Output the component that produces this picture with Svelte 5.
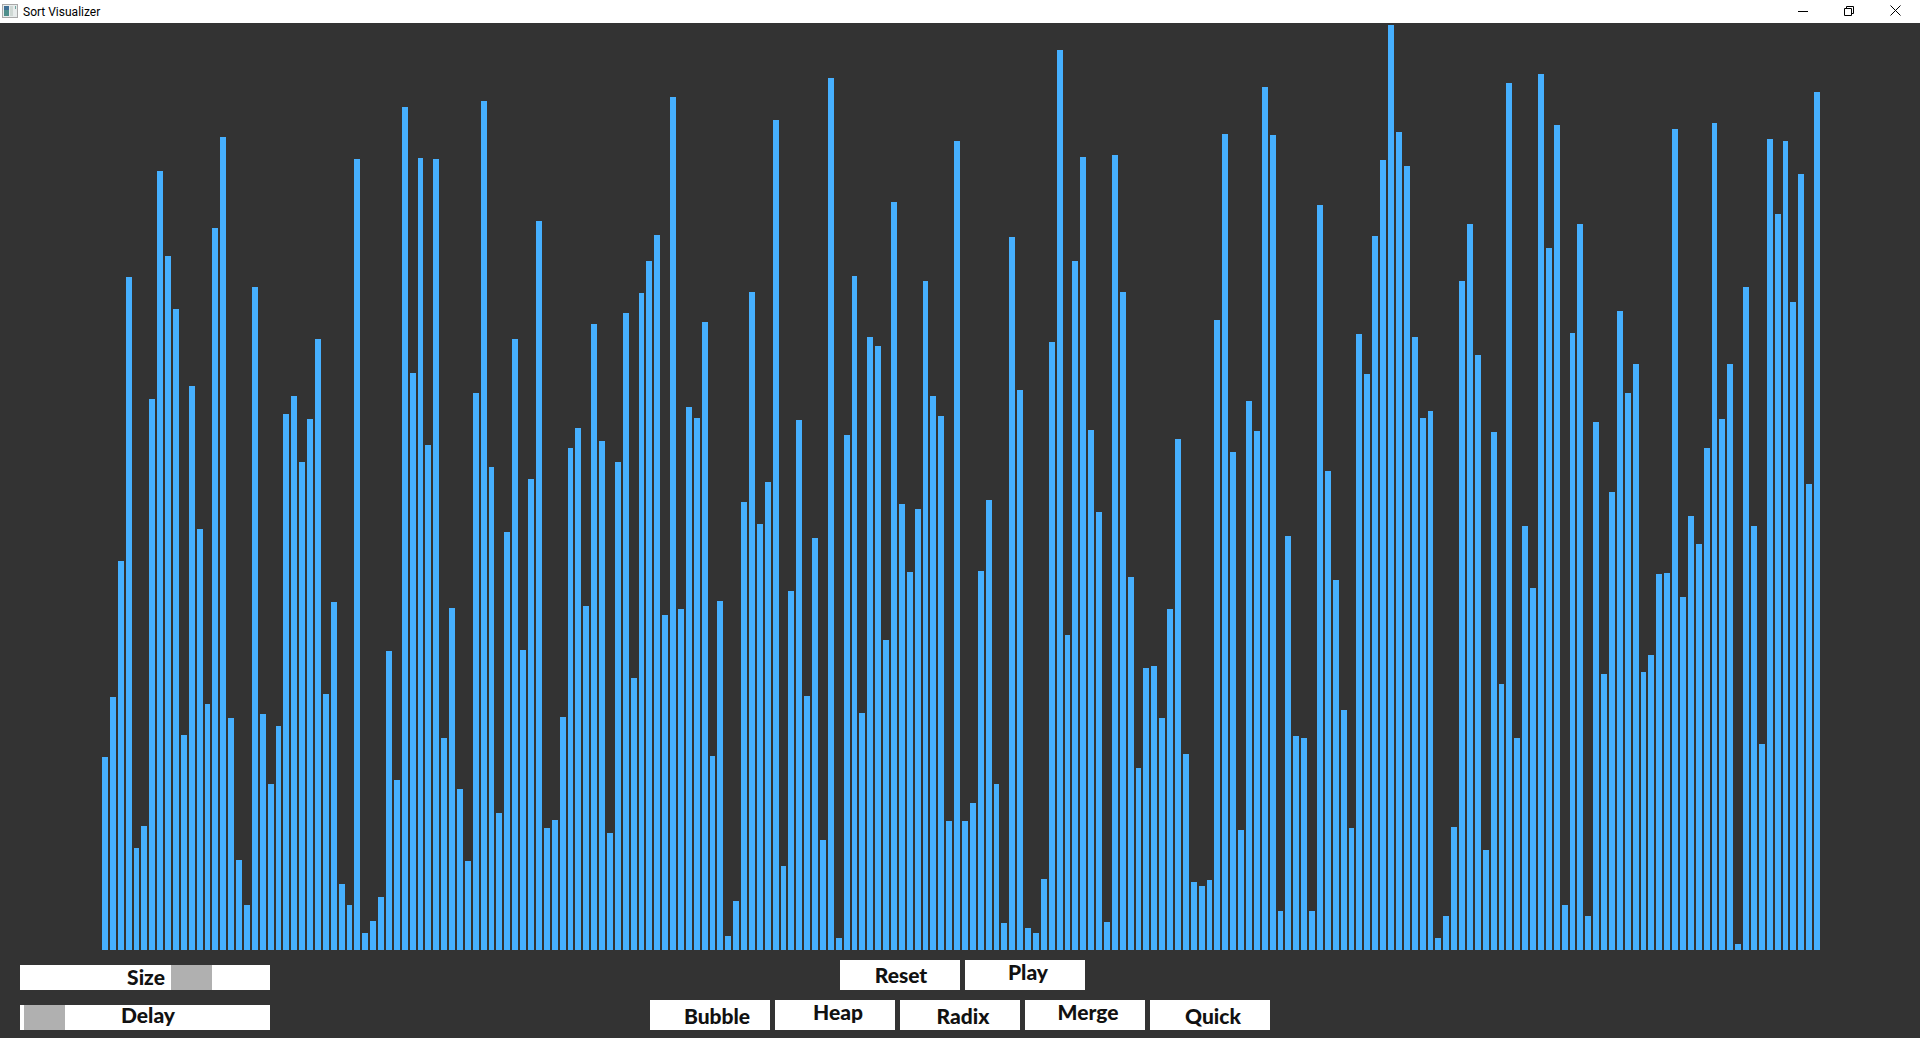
<script>
  // sort state, values in raw units
  const SCALE = 1 / 1.686;
  const values = [
    325, 427, 656, 1135, 172, 209, 929, 1313, 1170, 1081, 363, 951, 710, 415, 1217, 1371, 391, 152, 76, 1118,
    398, 280, 378, 904, 934, 823, 895, 1030, 432, 587, 111, 76, 1334, 29, 49, 89, 504, 287, 1421, 973,
    1335, 851, 1334, 357, 577, 272, 150, 939, 1431, 814, 231, 705, 1030, 506, 794, 1229, 206, 219, 393, 846,
    880, 580, 1056, 858, 197, 823, 1074, 459, 1108, 1162, 1206, 565, 1438, 575, 916, 897, 1059, 327, 588, 24,
    83, 755, 1109, 718, 789, 1399, 142, 605, 894, 428, 695, 186, 1470, 20, 868, 1136, 400, 1034, 1018, 523,
    1261, 752, 637, 744, 1128, 934, 900, 218, 1364, 218, 248, 639, 759, 280, 46, 1202, 944, 37, 29, 120,
    1025, 1517, 531, 1162, 1337, 877, 739, 47, 1340, 1109, 629, 307, 476, 479, 391, 575, 862, 331, 115, 108,
    118, 1062, 1376, 840, 202, 926, 875, 1455, 1374, 66, 698, 361, 357, 66, 1256, 808, 624, 405, 206, 1039,
    971, 1204, 1332, 1560, 1379, 1322, 1034, 897, 909, 20, 57, 207, 1128, 1224, 1003, 169, 873, 449, 1462, 357,
    715, 610, 1477, 1184, 1391, 76, 1040, 1224, 57, 890, 465, 772, 1077, 939, 988, 469, 497, 634, 636, 1384,
    595, 732, 685, 846, 1394, 895, 988, 10, 1118, 715, 347, 1367, 1241, 1364, 1093, 1308, 786, 1447
  ];

  // bars sit on whole pixels, so every ninth one or so comes out a pixel thinner
  const PITCH = 7.8899;
  const barLeft = (i) => Math.round(i * PITCH);
  const barWidth = (i) => barLeft(i + 1) - barLeft(i) - 2;

  // dx/dy: where the label sits inside its button
  const topRow = [
    { label: 'Reset', dx: 1, dy: 0 },
    { label: 'Play', dx: 3, dy: -3 }
  ];
  const algos = [
    { label: 'Bubble', dx: 7, dy: 1 },
    { label: 'Heap', dx: 3, dy: -3 },
    { label: 'Radix', dx: 3, dy: 1 },
    { label: 'Merge', dx: 3, dy: -3 },
    { label: 'Quick', dx: 3, dy: 1 }
  ];
</script>

<div class="window">
  <header class="titlebar">
    <div class="title">
      <svg class="app-icon" width="16" height="14" viewBox="0 0 16 14">
        <rect x="0.5" y="0.5" width="15" height="13" fill="#e8ecec" stroke="#a9a9a9" />
        <rect x="2" y="2" width="5" height="10" fill="#4f8f8c" />
        <rect x="2" y="2" width="5" height="4" fill="#3f6f94" />
        <rect x="8" y="2" width="3" height="10" fill="#cfd8d4" />
        <rect x="13" y="2" width="1" height="3" fill="#6fa5a0" />
      </svg>
      <span>Sort Visualizer</span>
    </div>
    <div class="win-buttons">
      <div class="win-btn">
        <svg width="10" height="10" viewBox="0 0 10 10"><path d="M0 5.5H10" stroke="#000" fill="none" /></svg>
      </div>
      <div class="win-btn">
        <svg width="10" height="10" viewBox="0 0 10 10">
          <path d="M0.5 2.5H7.5V9.5H0.5ZM2.5 2.5V0.5H9.5V7.5H7.5" stroke="#000" fill="none" />
        </svg>
      </div>
      <div class="win-btn">
        <svg width="11" height="11" viewBox="0 0 11 11"><path d="M0.5 0.5L10.5 10.5M10.5 0.5L0.5 10.5" stroke="#000" fill="none" /></svg>
      </div>
    </div>
  </header>

  <main class="chart">
    {#each values as v, i}
      <div class="bar" style="width: {barWidth(i)}px; height: {v * SCALE}px"></div>
    {/each}
  </main>

  <footer class="controls">
    <div class="sliders">
      <div class="slider">
        <div class="thumb" style="left: 151px"></div>
        <span style="transform: translate(1px, -1px)">Size</span>
      </div>
      <div class="slider">
        <div class="thumb" style="left: 4px"></div>
        <span style="transform: translate(3px, -3px)">Delay</span>
      </div>
    </div>

    <div class="buttons">
      <div class="row top">
        {#each topRow as b}
          <div class="btn"><span style="transform: translate({b.dx}px, {b.dy}px)">{b.label}</span></div>
        {/each}
      </div>
      <div class="row">
        {#each algos as b}
          <div class="btn"><span style="transform: translate({b.dx}px, {b.dy}px)">{b.label}</span></div>
        {/each}
      </div>
    </div>
  </footer>
</div>

<style>
  :global(body) {
    margin: 0;
    overflow: hidden;
    background: #333;
  }

  .window {
    width: 1920px;
    height: 1038px;
    display: flex;
    flex-direction: column;
    background: #333;
    font-family: Lato, "Open Sans", sans-serif;
  }

  .titlebar {
    height: 23px;
    flex: none;
    display: flex;
    justify-content: space-between;
    background: #fff;
  }

  .title {
    display: flex;
    align-items: center;
    gap: 5px;
    padding-left: 2px;
    font-family: Roboto, sans-serif;
    font-size: 12px;
    color: #000;
  }

  .app-icon {
    margin-top: -2px;
  }

  .win-buttons {
    display: flex;
    padding-right: 2px;
  }

  .win-btn {
    width: 46px;
    display: flex;
    align-items: center;
    justify-content: center;
    padding-bottom: 2px;
  }

  .chart {
    height: 927px;
    flex: none;
    margin-left: 102px;
    display: flex;
    align-items: flex-end;
    gap: 2px;
  }

  .bar {
    flex: none;
    background: #46b0ff;
  }

  .controls {
    flex: 1;
    display: flex;
  }

  .sliders {
    width: 250px;
    margin-left: 20px;
    padding-top: 15px;
    display: flex;
    flex-direction: column;
    gap: 15px;
  }

  .slider {
    position: relative;
    height: 25px;
    background: #fff;
    display: flex;
    align-items: center;
    justify-content: center;
    font-size: 21px;
    font-weight: 900;
    color: #111;
    line-height: 25px;
  }

  .thumb {
    position: absolute;
    top: 0;
    bottom: 0;
    width: 41px;
    background: #b0b0b0;
  }

  .buttons {
    margin-left: 380px;
    padding-top: 10px;
    display: flex;
    flex-direction: column;
    gap: 10px;
  }

  .row {
    display: flex;
    gap: 5px;
  }

  .row.top {
    margin-left: 190px;
  }

  .btn {
    width: 120px;
    height: 30px;
    background: #fff;
    display: flex;
    align-items: center;
    justify-content: center;
    font-size: 21px;
    font-weight: 900;
    color: #111;
    line-height: 28px;
  }
</style>
